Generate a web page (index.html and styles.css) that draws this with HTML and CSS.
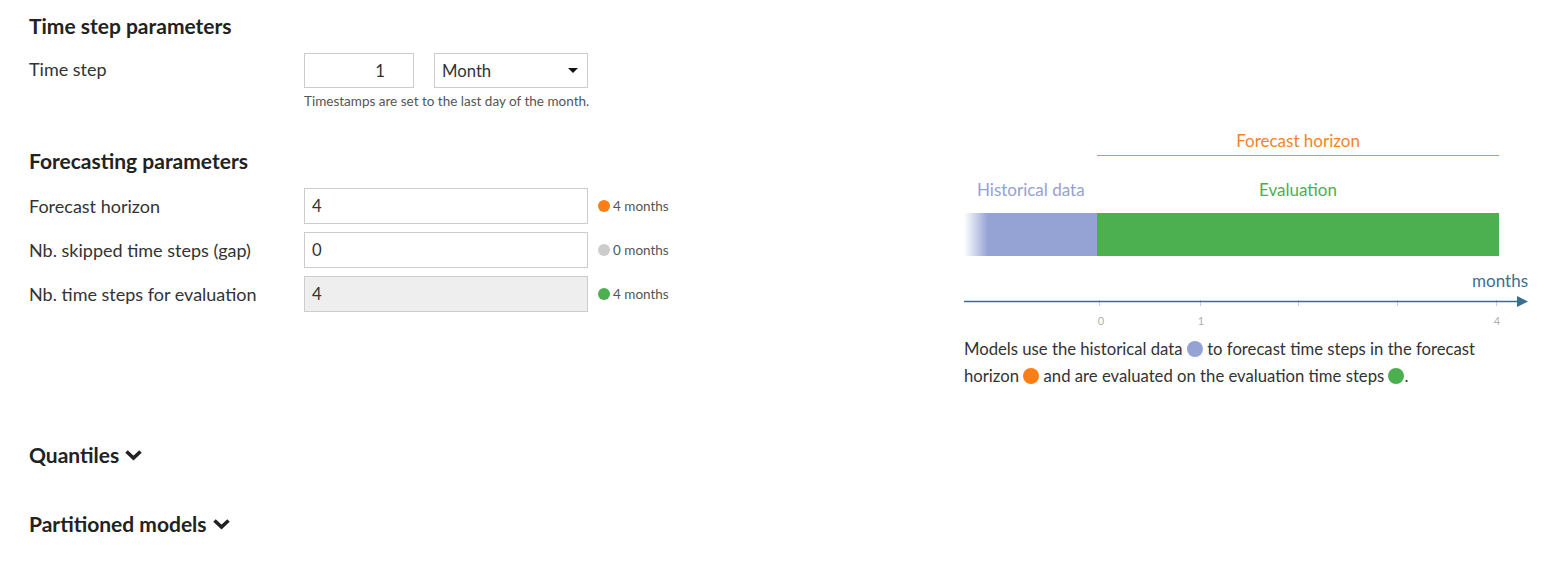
FILE: index.html
```html
<!DOCTYPE html>
<html>
<head>
<meta charset="utf-8">
<link rel="stylesheet" href="styles.css">
</head>
<body>
<div class="page">
  <section class="timestep">
    <h2 class="title">Time step parameters</h2>
    <div class="row">
      <div class="label">Time step</div>
      <div class="controls">
        <div class="ts-inputs">
          <div class="input num">1</div>
          <div class="input select">Month<span class="caret"></span></div>
        </div>
        <div class="hint">Timestamps are set to the last day of the month.</div>
      </div>
    </div>
  </section>

  <section class="forecast">
    <div class="form">
      <h2 class="title">Forecasting parameters</h2>
      <div class="frow">
        <div class="label">Forecast horizon</div>
        <div class="input wide">4</div>
        <div class="badge"><span class="dot orange"></span>4 months</div>
      </div>
      <div class="frow">
        <div class="label">Nb. skipped time steps (gap)</div>
        <div class="input wide">0</div>
        <div class="badge"><span class="dot grey"></span>0 months</div>
      </div>
      <div class="frow">
        <div class="label">Nb. time steps for evaluation</div>
        <div class="input wide disabled">4</div>
        <div class="badge"><span class="dot green"></span>4 months</div>
      </div>
    </div>
    <div class="chart">
      <svg class="chart-svg" width="580" height="205" viewBox="0 0 580 205">
        <defs>
          <linearGradient id="fade" gradientUnits="userSpaceOnUse" x1="4" y1="0" x2="28" y2="0">
            <stop offset="0" stop-color="#95a3d4" stop-opacity="0"/>
            <stop offset="1" stop-color="#95a3d4" stop-opacity="1"/>
          </linearGradient>
        </defs>
        <text x="338" y="19" text-anchor="middle" class="t-orange">Forecast horizon</text>
        <line x1="137" y1="27.5" x2="539" y2="27.5" stroke="#f0913a" stroke-width="1"/>
        <text x="17" y="68" class="t-blue">Historical data</text>
        <text x="338" y="68" text-anchor="middle" class="t-green">Evaluation</text>
        <rect x="4" y="85" width="133" height="43" fill="url(#fade)"/>
        <rect x="137" y="85" width="402" height="43" fill="#4caf50"/>
        <text x="568" y="159" text-anchor="end" class="t-axis">months</text>
        <g stroke="#cfcfcf" stroke-width="1">
          <line x1="139.5" y1="172" x2="139.5" y2="178"/>
          <line x1="240.5" y1="172" x2="240.5" y2="178"/>
          <line x1="338.5" y1="172" x2="338.5" y2="178"/>
          <line x1="437.5" y1="172" x2="437.5" y2="178"/>
          <line x1="536.5" y1="172" x2="536.5" y2="178"/>
        </g>
        <line x1="4" y1="173.5" x2="560" y2="173.5" stroke="#376f8c" stroke-width="1.3"/>
        <polygon points="557,168 568,173.5 557,179" fill="#376f8c"/>
        <text x="141" y="197" text-anchor="middle" class="t-tick">0</text>
        <text x="241" y="197" text-anchor="middle" class="t-tick">1</text>
        <text x="537" y="197" text-anchor="middle" class="t-tick">4</text>
      </svg>
      <p class="desc">Models use the historical data <span class="bdot blue"></span> to forecast time steps in the forecast<br>horizon <span class="bdot orange"></span> and are evaluated on the evaluation time steps <span class="bdot green"></span>.</p>
    </div>
  </section>

  <section class="collapsible first">
    <h2 class="title">Quantiles <svg class="chev" width="19" height="12" viewBox="0 0 19 12"><polyline points="2.5,2.5 9.5,9 16.5,2.5" fill="none" stroke="#222" stroke-width="3.6"/></svg></h2>
  </section>
  <section class="collapsible second">
    <h2 class="title">Partitioned models <svg class="chev" width="19" height="12" viewBox="0 0 19 12"><polyline points="2.5,2.5 9.5,9 16.5,2.5" fill="none" stroke="#222" stroke-width="3.6"/></svg></h2>
  </section>
</div>
</body>
</html>
```

FILE: styles.css
```css
* { box-sizing: border-box; }
body {
  margin: 0;
  background: #fff;
  font-family: "Lato", "Open Sans", "Liberation Sans", sans-serif;
  color: #333;
}
.page {
  padding: 14px 0 0 29px;
}
.title {
  margin: 0;
  font-size: 21px;
  line-height: 24px;
  font-weight: 700;
  color: #222;
  display: flex;
  align-items: center;
  gap: 5px;
}
.label {
  width: 275px;
  font-size: 18px;
  color: #333;
  flex-shrink: 0;
}
.row {
  display: flex;
  margin-top: 15px;
}
.row .label {
  padding-top: 5px;
}
.ts-inputs {
  display: flex;
  gap: 20px;
}
.input {
  border: 1px solid #ccc;
  background: #fff;
  height: 36px;
  font-size: 16.7px;
  color: #333;
  display: flex;
  align-items: center;
  padding: 0 7px;
}
.input.num {
  width: 110px;
  justify-content: flex-end;
  padding-right: 28px;
  height: 35px;
}
.input.select {
  width: 154px;
  height: 35px;
  justify-content: space-between;
  padding-right: 9px;
}
.caret {
  width: 0;
  height: 0;
  border-left: 5px solid transparent;
  border-right: 5px solid transparent;
  border-top: 5px solid #111;
}
.hint {
  font-size: 13.5px;
  color: #555;
  margin-top: 5px;
}
.forecast {
  display: flex;
  margin-top: 19px;
}
.form {
  width: 935px;
  padding-top: 21px;
}
.frow {
  display: flex;
  align-items: center;
  height: 36px;
  margin-top: 8px;
}
.form .title + .frow { margin-top: 15px; }
.input.wide {
  width: 284px;
  padding-left: 7px;
}
.input.disabled {
  background: #eee;
}
.badge {
  display: flex;
  align-items: center;
  font-size: 13.5px;
  color: #555;
  margin-left: 10px;
  gap: 3px;
}
.dot {
  width: 12px;
  height: 12px;
  border-radius: 50%;
  display: inline-block;
}
.orange { background: #fd7e14; }
.grey { background: #ccc; }
.green { background: #4caf50; }
.blue { background: #95a3d4; }
.chart {
  width: 580px;
  margin-left: -4px;
}
.chart-svg {
  display: block;
  font-family: "Lato", "Open Sans", "Liberation Sans", sans-serif;
}
.t-orange { fill: #f5832a; font-size: 17px; }
.t-blue { fill: #95a1d4; font-size: 17px; }
.t-green { fill: #4caf50; font-size: 17px; }
.t-axis { fill: #3a6f8f; font-size: 17px; }
.t-tick { fill: #b0b0b0; font-size: 11px; }
.desc {
  margin: 3px 0 0 4px;
  font-size: 16.7px;
  line-height: 27px;
  color: #333;
}
.bdot {
  display: inline-block;
  width: 16px;
  height: 16px;
  border-radius: 50%;
  vertical-align: -2px;
}
.collapsible.first { margin-top: 53px; }
.collapsible.second { margin-top: 45px; }
```
